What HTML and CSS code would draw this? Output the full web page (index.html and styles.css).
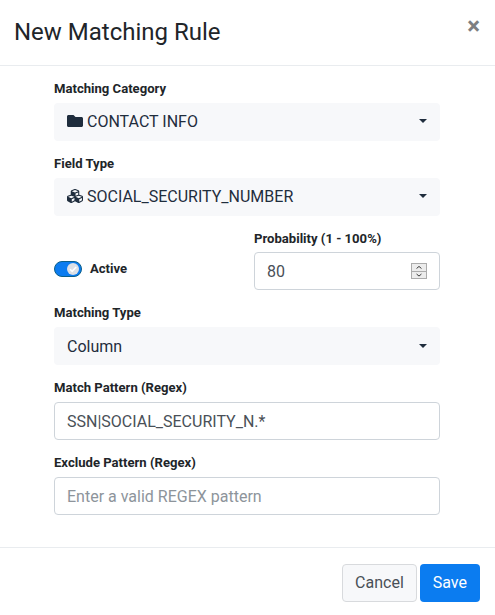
FILE: index.html
```html
<!DOCTYPE html>
<html lang="en">
<head>
    <meta charset="UTF-8">
    <title>New Matching Rule</title>
    <link rel="stylesheet" href="styles.css">
</head>
<body>
    <div class="modal">
        <div class="modal-header">
            <h5 class="modal-title">New Matching Rule</h5>
            <span class="close">&times;</span>
        </div>

        <form class="modal-body">
            <div class="form-group">
                <label>Matching Category</label>
                <div class="select select-icon">
                    <svg class="icon" viewBox="0 0 512 512" aria-hidden="true"><path d="M464 128H272l-64-64H48C21.5 64 0 85.5 0 112v288c0 26.5 21.5 48 48 48h416c26.5 0 48-21.5 48-48V176c0-26.5-21.5-48-48-48z"></path></svg>
                    <span>CONTACT INFO</span>
                </div>
            </div>

            <div class="form-group">
                <label>Field Type</label>
                <div class="select select-icon">
                    <svg class="icon" viewBox="0 0 512 512" aria-hidden="true"><path d="M488.6 250.2L392 214V105.5c0-15-9.3-28.4-23.4-33.7l-100-37.5c-8.1-3.1-17.1-3.1-25.3 0l-100 37.5c-14.1 5.3-23.4 18.7-23.4 33.7V214l-96.6 36.2C9.3 255.5 0 268.9 0 283.9V394c0 13.6 7.7 26.1 19.9 32.2l100 50c10.1 5.1 22.1 5.1 32.2 0l103.9-52 103.9 52c10.1 5.1 22.1 5.1 32.2 0l100-50c12.2-6.1 19.9-18.6 19.9-32.2V283.9c0-15-9.3-28.4-23.4-33.7zM358 214.8l-85 31.9v-68.2l85-37v73.3zM154 104.1l102-38.2 102 38.2v.6l-102 41.4-102-41.4v-.6zm84 291.1l-85 42.5v-79.1l85-38.8v75.4zm0-112l-102 41.4-102-41.4v-.6l102-38.2 102 38.2v.6zm240 112l-85 42.5v-79.1l85-38.8v75.4zm0-112l-102 41.4-102-41.4v-.6l102-38.2 102 38.2v.6z"></path></svg>
                    <span>SOCIAL_SECURITY_NUMBER</span>
                </div>
            </div>

            <div class="form-row">
                <div class="toggle-wrap">
                    <span class="toggle"><span class="knob"><svg viewBox="0 0 10 10" aria-hidden="true"><path d="M2.5 5.2l1.8 1.8 3.4-3.6"></path></svg></span></span>
                    <span class="toggle-label">Active</span>
                </div>
                <div class="form-group prob-group">
                    <label for="probability">Probability (1 - 100%)</label>
                    <div class="number-wrap">
                        <input type="number" id="probability" class="input" value="80" min="1" max="100">
                        <span class="spinner">
                            <svg viewBox="0 0 16 8" aria-hidden="true"><path d="M5 5.5l3-2.5 3 2.5"></path></svg>
                            <svg viewBox="0 0 16 8" aria-hidden="true"><path d="M5 2.5l3 2.5 3-2.5"></path></svg>
                        </span>
                    </div>
                </div>
            </div>

            <div class="form-group">
                <label>Matching Type</label>
                <div class="select"><span>Column</span></div>
            </div>

            <div class="form-group">
                <label for="matchPattern">Match Pattern (Regex)</label>
                <input type="text" id="matchPattern" class="input" value="SSN|SOCIAL_SECURITY_N.*">
            </div>

            <div class="form-group">
                <label for="excludePattern">Exclude Pattern (Regex)</label>
                <input type="text" id="excludePattern" class="input" placeholder="Enter a valid REGEX pattern">
            </div>
        </form>

        <div class="modal-footer">
            <button type="button" class="btn btn-light">Cancel</button>
            <button type="button" class="btn btn-primary">Save</button>
        </div>
    </div>
</body>
</html>
```

FILE: styles.css
```css
* {
    box-sizing: border-box;
}

body {
    margin: 0;
    background-color: #ffffff;
    font-family: Roboto, "Liberation Sans", Arial, sans-serif;
    color: #212529;
}

.modal {
    width: 495px;
    height: 615px;
    display: flex;
    flex-direction: column;
}

.modal-header {
    height: 66px;
    padding: 0 15px 0 14px;
    display: flex;
    justify-content: space-between;
    align-items: center;
    border-bottom: 1px solid #e9ecef;
}

.modal-title {
    margin: 0 0 2px;
    font-size: 24px;
    font-weight: 400;
    line-height: 36px;
}

.close {
    margin-bottom: 14px;
    font-size: 24px;
    font-weight: 700;
    line-height: 1;
    color: #7d7f82;
}

.modal-body {
    height: 482px;
    padding: 12px 55px 0 54px;
    border-bottom: 1px solid #e9ecef;
}

.form-group {
    margin-bottom: 12px;
}

label {
    display: block;
    height: 21px;
    margin-bottom: 4px;
    font-size: 13.1px;
    font-weight: 700;
    line-height: 21px;
    color: #212529;
}

.select {
    height: 38px;
    padding: 0 13px;
    display: flex;
    align-items: center;
    gap: 4px;
    position: relative;
    background-color: #f7f8fa;
    border-radius: 4px;
    font-size: 16px;
    color: #1f2d3d;
}

.select-icon {
    padding-bottom: 2px;
}

/* dropdown caret */
.select::after {
    content: "";
    position: absolute;
    right: 13px;
    top: 17px;
    border-top: 4px solid #1f2d3d;
    border-left: 4px solid transparent;
    border-right: 4px solid transparent;
}

.select-icon::after {
    top: 16px;
}

.icon {
    width: 16px;
    height: 16px;
    fill: #1f2d3d;
}

.form-row {
    display: flex;
    justify-content: space-between;
    align-items: center;
}

.toggle-wrap {
    display: flex;
    align-items: center;
    gap: 8px;
    margin-top: 8px;
}

.toggle {
    width: 28px;
    height: 16px;
    padding: 1px 2px;
    display: flex;
    justify-content: flex-end;
    align-items: center;
    background-color: #0b7cf0;
    border: 1px solid #0b5f8a;
    border-radius: 8px;
}

.knob {
    width: 12px;
    height: 12px;
    background-color: #dce0e6;
    border-radius: 50%;
    display: flex;
}

.knob svg {
    fill: none;
    stroke: #ffffff;
    stroke-width: 1.3;
}

.toggle-label {
    margin-bottom: 2px;
    font-size: 13.1px;
    font-weight: 700;
}

.prob-group {
    width: 186px;
}

.prob-group label {
    margin-bottom: 3px;
}

.number-wrap {
    position: relative;
}

.input {
    display: block;
    width: 100%;
    height: 38px;
    padding: 0 12px;
    background-color: #ffffff;
    border: 1px solid #ced4da;
    border-radius: 4px;
    font-family: inherit;
    font-size: 16px;
    color: #495057;
}

.input::placeholder {
    color: #8d949b;
}

.input::-webkit-inner-spin-button {
    display: none;
}

/* always visible number stepper */
.spinner {
    position: absolute;
    top: 11px;
    right: 13px;
    width: 16px;
    height: 16px;
    display: flex;
    flex-direction: column;
    background-color: #ececec;
    border: 1px solid #ababab;
}

.spinner svg {
    display: block;
    flex: 1;
    width: 100%;
    min-height: 0;
    fill: none;
    stroke: #333333;
    stroke-width: 1.2;
}

.spinner svg + svg {
    border-top: 1px solid #ababab;
}

.modal-footer {
    flex: 1;
    padding: 16px 15px 0;
    display: flex;
    justify-content: flex-end;
    align-items: flex-start;
    gap: 3px;
}

.btn {
    height: 38px;
    padding: 0 12px 2px;
    border: 1px solid transparent;
    border-radius: 4px;
    font-family: inherit;
    font-size: 16px;
}

.btn-light {
    background-color: #f7f8fa;
    border-color: #d8dadd;
    color: #495057;
}

.btn-primary {
    background-color: #0b7cf0;
    color: #ffffff;
}
```
